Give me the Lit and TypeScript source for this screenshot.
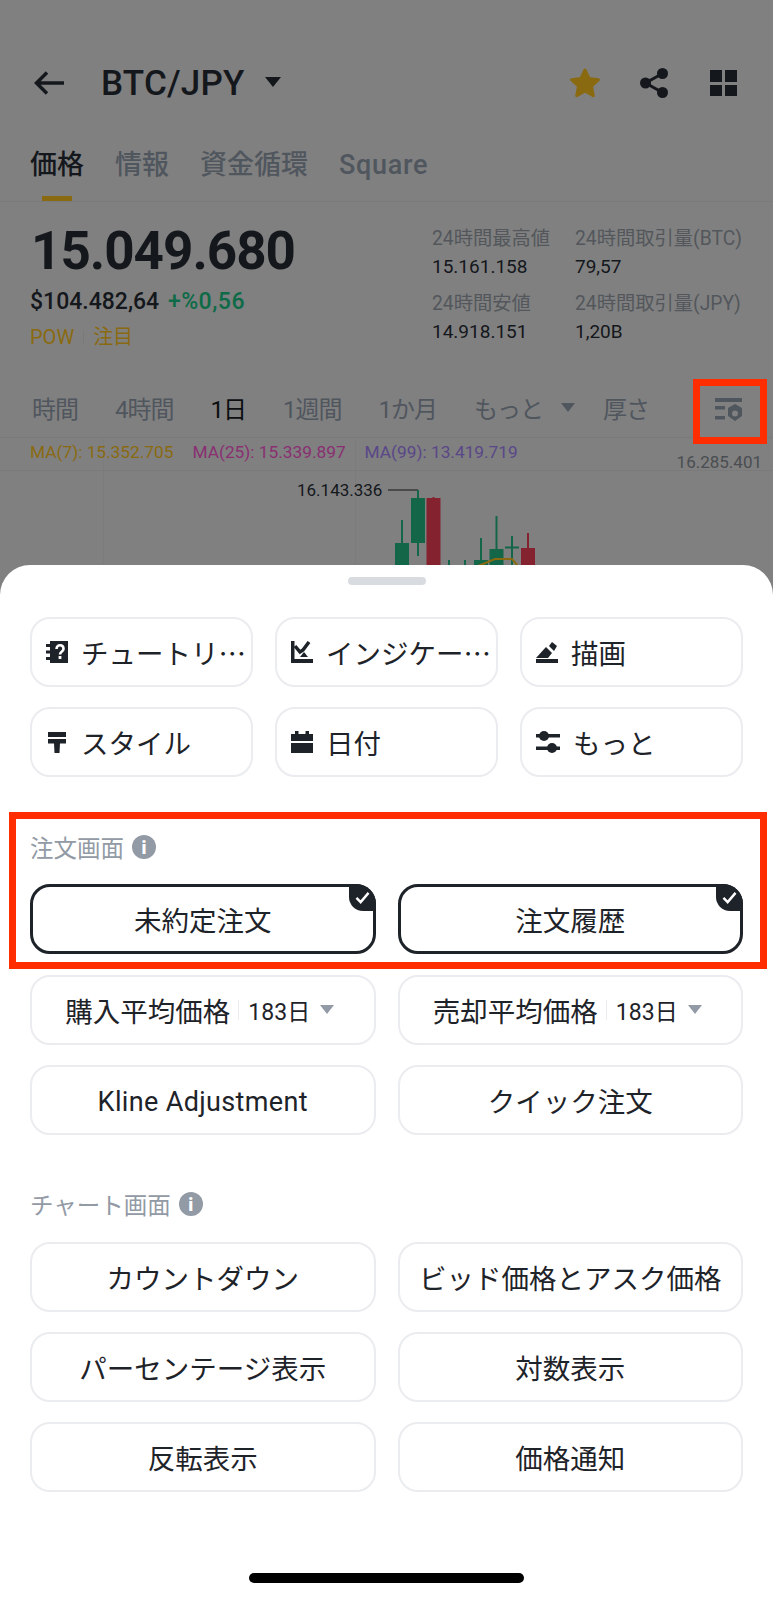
import { LitElement, html, css, svg } from "lit";
import { customElement } from "lit/decorators.js";

const tutorialIcon = html`<svg class="icon" viewBox="0 0 22 22">
  <path fill="#1e2329" d="M4 0h18v22H4v-3H0v-3h4v-3.500H0v-3h4V6H0V3h4z" />
  <path
    fill="none"
    stroke="#fff"
    stroke-width="2.600"
    d="M10.500 8c0-5 7-5 7 0 0 2.500-3.500 2.500-3.500 5.500"
  />
  <rect x="12.600" y="15" width="2.800" height="3" fill="#fff" />
</svg>`;

const indicatorIcon = html`<svg class="icon" viewBox="0 0 22 22">
  <path fill="#1e2329" d="M0 0h3.500v18h18.500v4H0z" />
  <path
    fill="none"
    stroke="#1e2329"
    stroke-width="3.500"
    d="M4 5l5 6 3-2 6-8"
  />
  <path fill="#1e2329" d="M9 16l4-5 4 5z" />
</svg>`;

const drawIcon = html`<svg class="icon" viewBox="0 0 22 22">
  <path fill="#1e2329" d="M0 17L10 6l6 6-4 5z" />
  <rect y="18" width="22" height="4" fill="#1e2329" />
  <path fill="#1e2329" d="M13 5l3-4 5 4-3 5z" />
</svg>`;

const styleIcon = html`<svg class="icon" viewBox="0 0 22 22">
  <rect x="2" y="1" width="18" height="5" fill="#1e2329" />
  <rect x="2" y="8" width="18" height="4.500" fill="#1e2329" />
  <path fill="#1e2329" d="M8 12h6l-.5 10h-5z" />
</svg>`;

const dateIcon = html`<svg class="icon" viewBox="0 0 22 22">
  <rect x="4" y="0" width="3.500" height="6" fill="#1e2329" />
  <rect x="14.500" y="0" width="3.500" height="6" fill="#1e2329" />
  <rect x="0" y="3" width="22" height="7" fill="#1e2329" />
  <rect x="0" y="12" width="22" height="10" fill="#1e2329" />
</svg>`;

const slidersIcon = html`<svg class="icon wide" viewBox="0 0 24 22">
  <rect y="3" width="24" height="3.500" fill="#1e2329" />
  <circle cx="8" cy="5" r="5" fill="#1e2329" />
  <rect y="15.500" width="24" height="3.500" fill="#1e2329" />
  <circle cx="16" cy="17" r="5" fill="#1e2329" />
</svg>`;

const toolButtons = [
  { label: "チュートリ…", icon: tutorialIcon },
  { label: "インジケー…", icon: indicatorIcon },
  { label: "描画", icon: drawIcon },
  { label: "スタイル", icon: styleIcon },
  { label: "日付", icon: dateIcon },
  { label: "もっと", icon: slidersIcon },
];

const chartButtons = [
  "カウントダウン",
  "ビッド価格とアスク価格",
  "パーセンテージ表示",
  "対数表示",
  "反転表示",
  "価格通知",
];

// page coordinates: x, wick top, wick bottom, body top, body bottom
const candles = [
  { x: 402, wickTop: 520, wickBottom: 566, top: 543, bottom: 566, up: true },
  { x: 418, wickTop: 490, wickBottom: 556, top: 498, bottom: 543, up: true },
  { x: 433.500, wickTop: 497, wickBottom: 566, top: 498, bottom: 566, up: false },
  { x: 481, wickTop: 538, wickBottom: 566, top: 560, bottom: 566, up: true },
  { x: 496.500, wickTop: 516, wickBottom: 566, top: 549, bottom: 566, up: true },
  { x: 528, wickTop: 533, wickBottom: 566, top: 548, bottom: 566, up: false },
];

const stats = [
  { label: "24時間最高値", value: "15.161.158" },
  { label: "24時間取引量(BTC)", value: "79,57" },
  { label: "24時間安値", value: "14.918.151" },
  { label: "24時間取引量(JPY)", value: "1,20B" },
];

@customElement("app-root")
export class AppRoot extends LitElement {
  renderChart() {
    return svg`
      <line x1="103.500" y1="438" x2="103.500" y2="566" stroke="#7c7c7c" />
      <line x1="355.500" y1="438" x2="355.500" y2="566" stroke="#7c7c7c" />
      <line x1="0" y1="470.500" x2="773" y2="470.500" stroke="#7a7a7a" />
      <line x1="388" y1="490" x2="418" y2="490" stroke="#4a4a4a" stroke-width="2" />
      <line x1="449" y1="560" x2="449" y2="566" stroke="#146648" stroke-width="2" />
      <line x1="465" y1="560" x2="465" y2="566" stroke="#146648" stroke-width="2" />
      <line x1="512" y1="536" x2="512" y2="566" stroke="#146648" stroke-width="2" />
      <line x1="505" y1="547.500" x2="519" y2="547.500" stroke="#146648" stroke-width="2" />
      ${candles.map((c) => {
        const color = c.up ? "#146648" : "#842230";
        return svg`
          <line x1=${c.x} y1=${c.wickTop} x2=${c.x} y2=${c.wickBottom} stroke=${color} stroke-width="2" />
          <rect x=${c.x - 7} y=${c.top} width="14" height=${c.bottom - c.top} fill=${color} />
        `;
      })}
      <polyline
        points="478,566 495,559 512,559 518,566"
        fill="none"
        stroke="#8a6a10"
        stroke-width="2"
      />
    `;
  }

  render() {
    return html`
      <div class="backdrop">
        <div class="header">
          <svg class="back" viewBox="0 0 30 24">
            <path
              d="M30 12H3M13 1.500L2.500 12 13 22.500"
              fill="none"
              stroke="#14171c"
              stroke-width="3.500"
            />
          </svg>
          <span class="pair">BTC/JPY</span>
          <span class="pair-caret"></span>
          <div class="header-actions">
            <svg class="star" viewBox="0 0 32 30">
              <path
                fill="#8a6a10"
                stroke="#8a6a10"
                stroke-width="3"
                stroke-linejoin="round"
                d="M16 2l4 8.500 9.500 1.200-7 6.500 1.800 9.500-8.300-4.700-8.300 4.700 1.800-9.500-7-6.500 9.500-1.200z"
              />
            </svg>
            <svg class="share" viewBox="0 0 28 30">
              <circle cx="22.500" cy="5.500" r="5.500" fill="#14171c" />
              <circle cx="5.500" cy="15" r="5.500" fill="#14171c" />
              <circle cx="22.500" cy="24.500" r="5.500" fill="#14171c" />
              <path
                d="M22.500 5.500L5.500 15l17 9.500"
                fill="none"
                stroke="#14171c"
                stroke-width="3"
              />
            </svg>
            <svg class="grid-icon" viewBox="0 0 27 26">
              <rect width="12" height="12" fill="#14171c" />
              <rect x="15" width="12" height="12" fill="#14171c" />
              <rect y="15" width="12" height="11" fill="#14171c" />
              <rect x="15" y="15" width="12" height="11" fill="#14171c" />
            </svg>
          </div>
        </div>

        <div class="tabs">
          <div class="tab active">
            <span>価格</span>
            <i></i>
          </div>
          <div class="tab"><span>情報</span></div>
          <div class="tab"><span>資金循環</span></div>
          <div class="tab square"><span>Square</span></div>
        </div>

        <div class="summary">
          <div class="price-block">
            <div class="price">15.049.680</div>
            <div class="fiat">$104.482,64 <span class="change">+%0,56</span></div>
            <div class="tags">
              <span>POW</span>
              <i></i>
              <span>注目</span>
            </div>
          </div>
          <div class="stats">
            ${stats.map(
              (s) => html`<div class="stat">
                <div class="stat-label">${s.label}</div>
                <div class="stat-value">${s.value}</div>
              </div>`
            )}
          </div>
        </div>

        <div class="intervals">
          <span>時間</span>
          <span>4時間</span>
          <span class="current">1日</span>
          <span>1週間</span>
          <span>1か月</span>
          <span class="more">もっと<i></i></span>
          <span>厚さ</span>
          <svg class="chart-settings" viewBox="0 0 27 24">
            <rect width="27" height="4" fill="#50565e" />
            <rect y="8" width="10" height="3.500" fill="#50565e" />
            <rect y="18" width="10" height="3.500" fill="#50565e" />
            <path
              fill="#50565e"
              fill-rule="evenodd"
              d="M20 6l7 4v8l-7 5-7-5v-8zm0 6.500a3 3 0 100 6 3 3 0 000-6z"
            />
          </svg>
        </div>

        <div class="chart">
          <svg class="chart-canvas" viewBox="0 438 773 128">${this.renderChart()}</svg>
          <div class="averages">
            <span class="ma7">MA(7): 15.352.705</span>
            <span class="ma25">MA(25): 15.339.897</span>
            <span class="ma99">MA(99): 13.419.719</span>
          </div>
          <span class="axis-high">16.285.401</span>
          <span class="peak">16.143.336</span>
        </div>
      </div>

      <div class="sheet">
        <div class="grabber"></div>

        <div class="tools">
          ${toolButtons.map(
            (b) => html`<div class="btn tool">
              ${b.icon}
              <span>${b.label}</span>
            </div>`
          )}
        </div>

        <div class="section-title first">
          <span>注文画面</span>
          <span class="info">i</span>
        </div>
        <div class="options selected-row">
          <div class="btn selected">未約定注文<span class="tick">${this.renderTick()}</span></div>
          <div class="btn selected">注文履歴<span class="tick">${this.renderTick()}</span></div>
        </div>
        <div class="options">
          <div class="btn period">
            購入平均価格<i class="divider"></i><span class="days">183日</span><i class="caret"></i>
          </div>
          <div class="btn period">
            売却平均価格<i class="divider"></i><span class="days">183日</span><i class="caret"></i>
          </div>
          <div class="btn latin">Kline Adjustment</div>
          <div class="btn">クイック注文</div>
        </div>

        <div class="section-title">
          <span>チャート画面</span>
          <span class="info">i</span>
        </div>
        <div class="options">
          ${chartButtons.map((label) => html`<div class="btn">${label}</div>`)}
        </div>

        <div class="home-bar"></div>
        <div class="mark order-mark"></div>
      </div>

      <div class="mark settings-mark"></div>
    `;
  }

  renderTick() {
    return html`<svg viewBox="0 0 16 14">
      <path d="M1.500 7.500L6 12 14.500 2" fill="none" stroke="#fff" stroke-width="2.600" />
    </svg>`;
  }

  static styles = css`
    :host {
      display: block;
      position: relative;
      width: 773px;
      height: 1600px;
      overflow: hidden;
      background: #808080;
      font-family: "Roboto", "Noto Sans CJK JP", sans-serif;
      color: #14171c;
    }

    i {
      display: block;
    }

    .backdrop {
      display: flex;
      flex-direction: column;
      height: 565px;
    }

    .header {
      display: flex;
      align-items: center;
      height: 30px;
      margin-top: 68px;
      padding: 0 36px 0 34px;
    }

    .back {
      width: 30px;
      height: 24px;
    }

    .pair {
      margin-left: 37px;
      font-size: 35px;
      font-weight: 500;
      letter-spacing: 0.2px;
    }

    .pair-caret {
      width: 0;
      height: 0;
      margin: -2px 0 0 20px;
      border-left: 8px solid transparent;
      border-right: 8px solid transparent;
      border-top: 10px solid #14171c;
    }

    .header-actions {
      display: flex;
      align-items: center;
      gap: 39px;
      margin-left: auto;
    }

    .star {
      width: 32px;
      height: 30px;
    }

    .share {
      width: 28px;
      height: 30px;
    }

    .grid-icon {
      width: 27px;
      height: 26px;
      margin-left: 3px;
    }

    .tabs {
      display: flex;
      gap: 31px;
      margin-top: 52px;
      padding: 0 30px;
      height: 51px;
      border-bottom: 1px solid #7a7a7a;
      font-size: 27px;
      font-weight: 500;
      line-height: 30px;
      color: #50565e;
    }

    .tab {
      display: flex;
      flex-direction: column;
      align-items: center;
    }

    .tab.active {
      color: #14171c;
    }

    .tab.square {
      letter-spacing: 0.7px;
    }

    .tab i {
      width: 30px;
      height: 5px;
      margin-top: 16px;
      background: #8a6a10;
    }

    .summary {
      display: flex;
      height: 190px;
      padding-left: 30px;
    }

    .price-block {
      width: 402px;
      padding-top: 23px;
    }

    .price {
      margin-left: 1px;
      font-size: 53px;
      font-weight: 700;
      line-height: 53px;
      letter-spacing: -1px;
    }

    .fiat {
      margin-top: 11px;
      font-size: 23px;
      font-weight: 500;
      line-height: 26px;
    }

    .change {
      margin-left: 3px;
      letter-spacing: 0.5px;
      color: #0e6b48;
    }

    .tags {
      display: flex;
      align-items: center;
      margin-top: 10px;
      font-size: 20px;
      line-height: 24px;
      color: #8a6a10;
    }

    .tags i {
      width: 1px;
      height: 14px;
      margin: 0 9px;
      background: #7a7a7a;
    }

    .stats {
      display: grid;
      grid-template-columns: 143px auto;
      row-gap: 13px;
      padding-top: 25px;
      align-content: start;
    }

    .stat-label {
      font-size: 19.300px;
      line-height: 24px;
      color: #53575c;
    }

    .stat-value {
      margin-top: 4px;
      font-size: 19px;
      line-height: 24px;
    }

    .intervals {
      display: flex;
      align-items: center;
      gap: 37px;
      height: 31px;
      padding: 0 31px 14px 32px;
      border-bottom: 1px solid #7a7a7a;
      font-size: 24px;
      letter-spacing: -1px;
      color: #50565e;
    }

    .current {
      color: #0c0e11;
    }

    .more {
      display: flex;
      align-items: center;
      gap: 18px;
      margin-right: -9px;
    }

    .more i {
      width: 0;
      height: 0;
      border-left: 7px solid transparent;
      border-right: 7px solid transparent;
      border-top: 9px solid #50565e;
    }

    .chart-settings {
      width: 27px;
      height: 24px;
      margin: 5px 0 0 auto;
    }

    .chart {
      position: relative;
      height: 127px;
      overflow: hidden;
    }

    .chart-canvas {
      position: absolute;
      inset: 0;
      width: 773px;
      height: 128px;
    }

    .averages {
      position: relative;
      display: flex;
      gap: 19px;
      padding: 1px 0 0 30px;
      font-size: 17.300px;
      line-height: 26px;
    }

    .ma7 {
      color: #8a6a10;
    }

    .ma25 {
      color: #8a2f72;
    }

    .ma99 {
      color: #5a4788;
    }

    .axis-high {
      position: absolute;
      top: 12px;
      right: 11px;
      font-size: 17px;
      line-height: 24px;
      color: #4a4d51;
    }

    .peak {
      position: absolute;
      top: 41px;
      left: 297px;
      font-size: 17px;
      line-height: 22px;
      color: #14171c;
    }

    .sheet {
      position: relative;
      display: flex;
      flex-direction: column;
      height: 1035px;
      box-sizing: border-box;
      padding: 12px 30px 0 30px;
      background: #fff;
      border-radius: 30px 30px 0 0;
      color: #1e2329;
      font-family: "Noto Sans CJK JP", "Roboto", sans-serif;
    }

    .grabber {
      align-self: center;
      width: 78px;
      height: 8px;
      margin-bottom: 32px;
      border-radius: 4px;
      background: #d8dbe0;
    }

    .tools {
      display: grid;
      grid-template-columns: repeat(3, 1fr);
      column-gap: 22px;
      row-gap: 20px;
    }

    .options {
      display: grid;
      grid-template-columns: 1fr 1fr;
      column-gap: 22px;
      row-gap: 20px;
    }

    .selected-row {
      margin-bottom: 21px;
    }

    .btn {
      position: relative;
      display: flex;
      align-items: center;
      justify-content: center;
      min-width: 0;
      height: 70px;
      box-sizing: border-box;
      border: 2px solid #eaecef;
      border-radius: 20px;
      font-size: 27.500px;
      white-space: nowrap;
    }

    .tool {
      justify-content: flex-start;
      gap: 13px;
      padding: 0 5px 0 14px;
    }

    .period {
      padding-right: 6px;
    }

    .icon {
      flex: none;
      width: 22px;
      height: 22px;
    }

    .icon.wide {
      width: 24px;
      height: 22px;
    }

    .latin {
      padding-top: 3px;
      font-family: "Roboto", sans-serif;
      font-size: 27px;
      letter-spacing: 0.35px;
    }

    .selected {
      border: 3px solid #1e2329;
    }

    .tick {
      position: absolute;
      top: -3px;
      right: -3px;
      display: flex;
      align-items: center;
      justify-content: center;
      width: 27px;
      height: 27px;
      border-radius: 0 20px 0 14px;
      background: #1e2329;
    }

    .tick svg {
      width: 15px;
      height: 13px;
    }

    .divider {
      width: 1px;
      height: 20px;
      margin: 0 9px 0 8px;
      background: #eaecef;
    }

    .days {
      font-family: "Roboto", "Noto Sans CJK JP", sans-serif;
      font-size: 23px;
    }

    .caret {
      width: 0;
      height: 0;
      margin: 0 0 2px 10px;
      border-left: 7px solid transparent;
      border-right: 7px solid transparent;
      border-top: 9px solid #929aa5;
    }

    .section-title {
      display: flex;
      align-items: center;
      gap: 8px;
      height: 30px;
      margin: 54px 0 23px;
      font-size: 23.500px;
      color: #929aa5;
    }

    .section-title.first {
      margin: 55px 0 22px;
    }

    .info {
      display: flex;
      align-items: center;
      justify-content: center;
      width: 24px;
      height: 24px;
      border-radius: 50%;
      background: #929aa5;
      color: #fff;
      font-family: "Roboto", sans-serif;
      font-size: 18px;
      font-weight: 900;
    }

    .home-bar {
      align-self: center;
      width: 275px;
      height: 10px;
      margin-top: auto;
      margin-bottom: 17px;
      border-radius: 5px;
      background: #000;
    }

    .mark {
      position: absolute;
      box-sizing: border-box;
      border: 7.500px solid #ff2d00;
    }

    .settings-mark {
      top: 379px;
      left: 693px;
      width: 74px;
      height: 65px;
    }

    .order-mark {
      top: 247px;
      left: 9px;
      width: 758px;
      height: 157px;
    }
  `;
}
